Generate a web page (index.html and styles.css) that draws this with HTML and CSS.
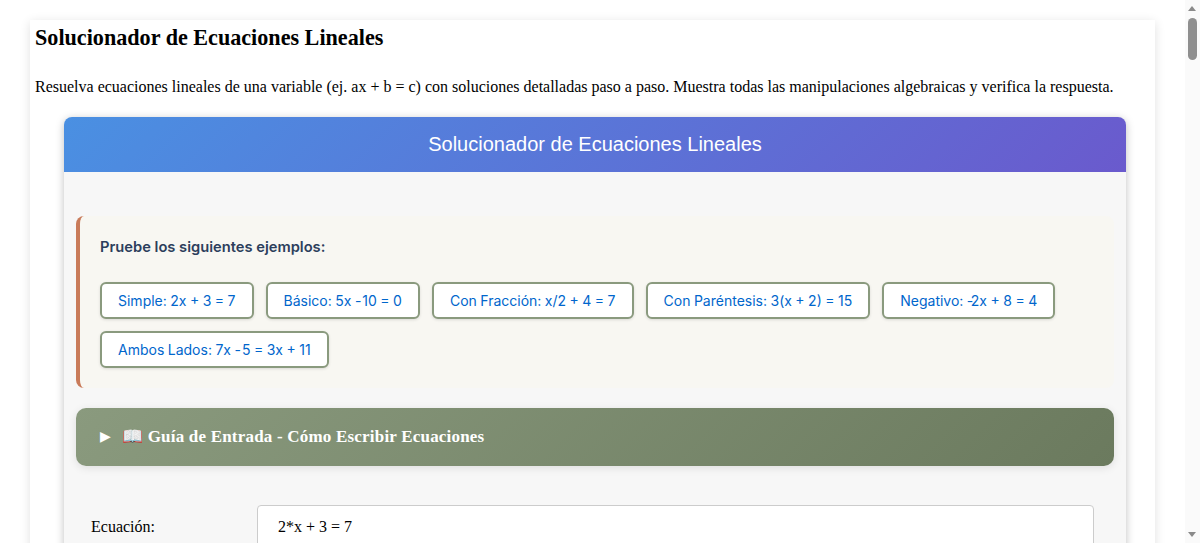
FILE: index.html
```html
<!DOCTYPE html>
<html lang="es">
<head>
<meta charset="utf-8">
<title>Solucionador de Ecuaciones Lineales</title>
<link rel="stylesheet" href="styles.css">
</head>
<body>
<main class="page-card">
  <h2 class="page-title">Solucionador de Ecuaciones Lineales</h2>
  <p class="page-desc">Resuelva ecuaciones lineales de una variable (ej. ax + b = c) con soluciones detalladas paso a paso. Muestra todas las manipulaciones algebraicas y verifica la respuesta.</p>
  <section class="app">
    <header class="app-header">Solucionador de Ecuaciones Lineales</header>
    <div class="app-body">
      <div class="examples">
        <div class="examples-title">Pruebe los siguientes ejemplos:</div>
        <div class="example-list">
          <button class="example">Simple: 2x + 3 = 7</button>
          <button class="example">Básico: 5x <span class="dash">-</span> 10 = 0</button>
          <button class="example">Con Fracción: x/2 + 4 = 7</button>
          <button class="example">Con Paréntesis: 3(x + 2) = 15</button>
          <button class="example">Negativo: <span class="dash">-</span>2x + 8 = 4</button>
          <button class="example">Ambos Lados: 7x <span class="dash">-</span> 5 = 3x + 11</button>
        </div>
      </div>
      <div class="guide"><span class="guide-arrow">▶</span><span class="guide-text">📖 Guía de Entrada - Cómo Escribir Ecuaciones</span></div>
      <div class="form-row">
        <label class="form-label" for="eq">Ecuación:</label>
        <input class="form-input" id="eq" value="2*x + 3 = 7">
      </div>
    </div>
  </section>
</main>
<div class="scrollbar" aria-hidden="true">
  <span class="scroll-up"></span>
  <span class="scroll-thumb"></span>
  <span class="scroll-down"></span>
</div>
</body>
</html>
```
FILE: styles.css
```css
* { box-sizing: border-box; }
html { background: #fff; }
body {
  margin: 0;
  padding: 20px 45px 40px 30px;
  font-family: "Liberation Serif", "Times New Roman", serif;
  font-size: 16px;
  color: #000;
  background: #fff;
}
.page-card {
  background: #fff;
  padding: 5px 5px 20px;
  box-shadow: 0 2px 10px rgba(0, 0, 0, 0.12);
}
.page-title {
  margin: 0;
  font-size: 22.15px;
  line-height: 25px;
  font-weight: 700;
}
.page-desc {
  margin: 28px 0 0;
  line-height: 18px;
}
.app {
  width: 1062px;
  margin: 21px 0 0 29px;
  border-radius: 8px;
  background: #f7f7f7;
  box-shadow: 0 2px 8px rgba(0, 0, 0, 0.25);
  overflow: hidden;
}
.app-header {
  height: 55px;
  display: flex;
  align-items: center;
  justify-content: center;
  font-family: "Liberation Sans", Arial, sans-serif;
  font-size: 20px;
  color: #fff;
  background: linear-gradient(135deg, #4a90e2, #6a5acd);
}
.app-body {
  padding: 44px 12px 24px;
}
.examples {
  height: 172px;
  padding: 20px 20px 0;
  background: #f8f7f2;
  border-left: 4px solid #c97b5a;
  border-radius: 8px;
}
.examples-title {
  font-family: Inter, "Noto Sans", sans-serif;
  font-size: 14.7px;
  font-weight: 600;
  line-height: 22px;
  color: #2c3e5c;
}
.example-list {
  display: flex;
  flex-wrap: wrap;
  gap: 12px;
  margin-top: 24px;
}
.example {
  height: 37px;
  padding: 0 16px;
  font-family: Inter, "Noto Sans", sans-serif;
  font-size: 14px;
  word-spacing: -0.45px;
  color: #0066cc;
  background: #fff;
  border: 2px solid #8a9a7e;
  border-radius: 6px;
  box-shadow: 0 1px 3px rgba(0, 0, 0, 0.12);
}
.dash {
  letter-spacing: -2.5px;
}
.guide {
  height: 58px;
  margin-top: 20px;
  padding: 0 24px 1px;
  display: flex;
  align-items: center;
  gap: 11px;
  font-family: "Liberation Serif", serif;
  font-size: 17px;
  font-weight: 700;
  letter-spacing: 0.2px;
  color: #fff;
  background: linear-gradient(135deg, #8a9a7e, #6b7a5e);
  border-radius: 10px;
  box-shadow: 0 2px 8px rgba(0, 0, 0, 0.1);
}
.guide-arrow {
  font-size: 14px;
  font-weight: 400;
  letter-spacing: 0;
}
.form-row {
  display: flex;
  align-items: flex-start;
  margin-top: 39px;
  padding-left: 15px;
}
.form-label {
  width: 166px;
  padding-top: 13px;
}
.form-input {
  width: 837px;
  height: 44px;
  padding: 0 20px;
  font: 16px "Liberation Serif", serif;
  color: #000;
  background: #fff;
  border: 1px solid #ccc;
  border-radius: 4px;
}
.scrollbar {
  position: fixed;
  top: 0;
  right: 0;
  bottom: 0;
  width: 15px;
  background: #fafafa;
}
.scroll-up, .scroll-down {
  position: absolute;
  left: 3px;
  width: 0;
  height: 0;
  border-left: 4.5px solid transparent;
  border-right: 4.5px solid transparent;
}
.scroll-up {
  top: 6px;
  border-bottom: 5px solid #8a8a8a;
}
.scroll-down {
  bottom: 6px;
  border-top: 5px solid #8a8a8a;
}
.scroll-thumb {
  position: absolute;
  top: 18px;
  left: 3px;
  width: 9px;
  height: 42px;
  background: #8f8f8f;
  border-radius: 5px;
}
```
